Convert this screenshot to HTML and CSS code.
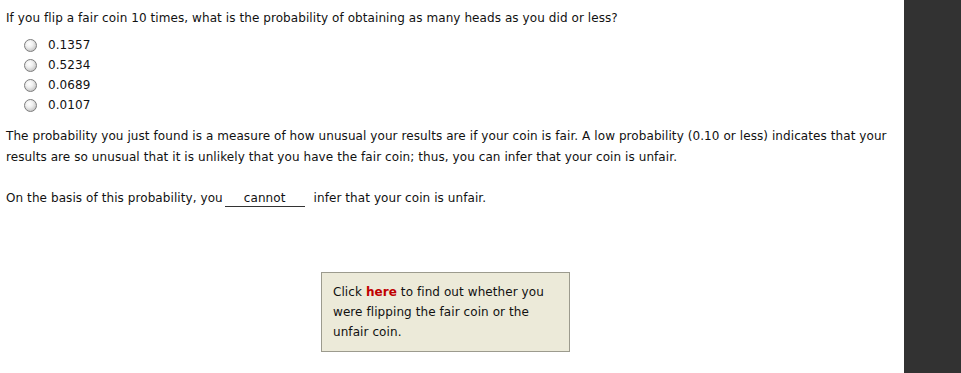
FILE: index.html
```html
<!DOCTYPE html>
<html>
<head>
    <meta charset="utf-8">
    <title>Coin Flip Probability</title>
    <link rel="stylesheet" href="styles.css">
</head>
<body>
    <div class="page">
        <div class="content">
            <p class="question">If you flip a fair coin 10 times, what is the probability of obtaining as many heads as you did or less?</p>

            <ul class="choices">
                <li><span class="radio"></span>0.1357</li>
                <li><span class="radio"></span>0.5234</li>
                <li><span class="radio"></span>0.0689</li>
                <li><span class="radio"></span>0.0107</li>
            </ul>

            <p class="explain">The probability you just found is a measure of how unusual your results are if your coin is fair. A low probability (0.10 or less) indicates that your results are so unusual that it is unlikely that you have the fair coin; thus, you can infer that your coin is unfair.</p>

            <p class="answer">On the basis of this probability, you <span class="blank">cannot</span> infer that your coin is unfair.</p>

            <div class="reveal">
                Click <a href="#">here</a> to find out whether you were flipping the fair coin or the unfair coin.
            </div>
        </div>
        <div class="sidebar"></div>
    </div>
</body>
</html>
```

FILE: styles.css
```css
html, body {
    margin: 0;
    padding: 0;
    height: 100%;
}

body {
    font-family: "DejaVu Sans", Verdana, sans-serif;
    font-size: 12px;
    letter-spacing: 0.08px;
    color: #111;
    background: #fff;
}

.page {
    display: flex;
    height: 100%;
}

.content {
    flex: 1;
    padding: 8px 0 0 6px;
}

.sidebar {
    width: 57px;
    background-color: #323232;
}

p {
    margin: 0;
}

.question {
    line-height: 20px;
}

.choices {
    list-style: none;
    margin: 7px 0 0 0;
    padding: 0 0 0 18px;
}

.choices li {
    display: flex;
    align-items: center;
    height: 20px;
}

.radio {
    width: 11px;
    height: 11px;
    border: 1px solid #7d7d7d;
    border-radius: 50%;
    margin-right: 11px;
    background: radial-gradient(circle at 40% 35%, #ffffff 0%, #f0f0f0 35%, #c4c4c4 80%, #a8a8a8 100%);
}

.explain {
    margin-top: 11px;
    line-height: 21px;
    padding-right: 14px;
}

.answer {
    margin-top: 20px;
    line-height: 20px;
}

.blank {
    display: inline-block;
    width: 80px;
    text-align: center;
    border-bottom: 1px solid #333;
    line-height: 16px;
    margin: 0 5px 0 -2px;
}

.reveal {
    width: 225px;
    margin: 64px 0 0 315px;
    padding: 9px 11px 9px 11px;
    background-color: #ecead9;
    border: 1px solid #9c9b8e;
    line-height: 20px;
}

.reveal a {
    color: #c00000;
    font-weight: bold;
    text-decoration: none;
}
```
